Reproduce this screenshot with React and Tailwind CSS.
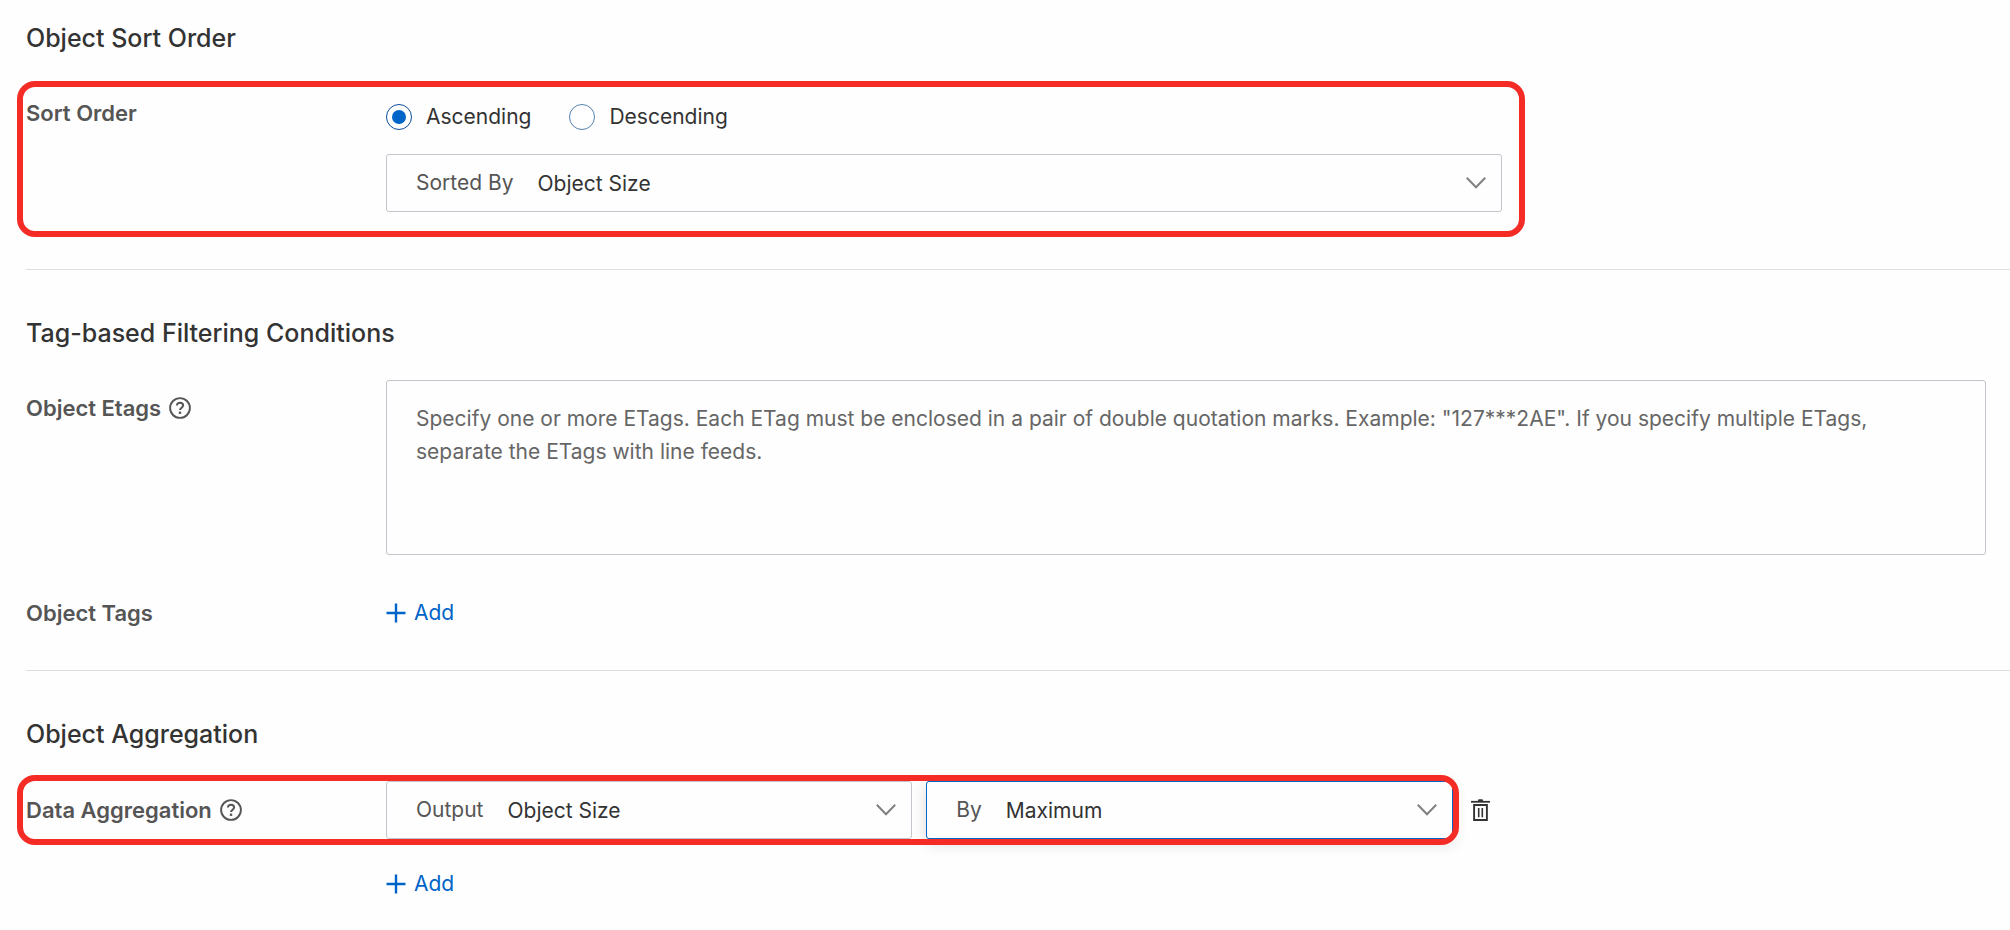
import { useState } from "react";

const HEADING = "text-[25px] leading-[34px] font-medium text-[#333333]";
const LABEL = "flex w-[360px] shrink-0 items-center gap-2 text-[22px] leading-[32px] font-semibold text-[#555555]";
const FRAME = "pointer-events-none absolute inset-0 rounded-[18px] border-[6px] border-[#f52c25]";

function HelpIcon() {
  return (
    <svg viewBox="0 0 22 22" className="size-[22px]" fill="none" stroke="currentColor" strokeWidth="2" aria-hidden="true">
      <circle cx="11" cy="11" r="9.9" strokeWidth="1.9" />
      <path d="M7.9 8.6C7.9 6.9 9.2 5.8 11 5.8s3.1 1.1 3.1 2.7c0 2.1-3.1 2.3-3.1 4.6" />
      <path d="M11 14.6v2.3" strokeWidth="2.4" />
    </svg>
  );
}

function TrashIcon() {
  return (
    <svg viewBox="0 0 19 22" className="h-[22px] w-[19px]" fill="none" stroke="#333333" aria-hidden="true">
      <path d="M0 2.8h19" strokeWidth="1.8" />
      <path d="M6.5 2.4L7.5 0.3h4l1 2.1z" fill="#333333" stroke="none" />
      <path d="M3.1 6h12.8v15H3.1z" strokeWidth="1.9" />
      <path d="M7.7 9v9.2M11.3 9v9.2" strokeWidth="1.6" />
    </svg>
  );
}

function Radio({ label, value, current, onChange }) {
  return (
    <label className="flex items-center gap-[14px] text-[21px] leading-[32px] text-[#333333]">
      <input
        type="radio"
        name="sort-order"
        value={value}
        checked={current === value}
        onChange={() => onChange(value)}
        className="grid size-[26px] appearance-none place-content-center rounded-full border border-[#5580b0] bg-white checked:border-[#0a4c9c] checked:before:size-[14px] checked:before:rounded-full checked:before:bg-[#0064c8]"
      />
      {label}
    </label>
  );
}

function PrefixedSelect({ id, prefix, options, active }) {
  return (
    <div
      className={
        active
          ? "relative flex h-[58px] flex-1 items-center rounded-[3px] border border-[#0064c8] bg-[#fefefe] pl-[29px] shadow-[0_4px_16px_rgba(0,0,0,0.14)]"
          : "relative flex h-[58px] flex-1 items-center rounded-[3px] border border-[#c0c6cc] bg-[#fefefe] pl-[29px]"
      }
    >
      <label htmlFor={id} className="text-[21px] leading-[32px] whitespace-nowrap text-[#555555]">
        {prefix}
      </label>
      <select
        id={id}
        className="h-full min-w-0 flex-1 appearance-none bg-transparent pt-[2px] pr-[56px] pl-6 text-[21px] leading-[32px] text-[#333333] outline-none"
      >
        {options.map((option) => (
          <option key={option}>{option}</option>
        ))}
      </select>
      <svg
        viewBox="0 0 20 12"
        className="pointer-events-none absolute right-[15px] h-[12px] w-[20px]"
        fill="none"
        stroke="#808080"
        strokeWidth="2"
        aria-hidden="true"
      >
        <path d="M0.8 0.8L10 10.2L19.2 0.8" />
      </svg>
    </div>
  );
}

function AddButton() {
  return (
    <button type="button" className="flex items-center gap-2 text-[21px] leading-[32px] text-[#0064c8]">
      <svg viewBox="0 0 20 20" className="size-[20px]" stroke="currentColor" strokeWidth="2.4" aria-hidden="true">
        <path d="M10 0.5v19M0.5 10h19" />
      </svg>
      Add
    </button>
  );
}

export default function App() {
  const [order, setOrder] = useState("asc");

  return (
    <main className="min-h-screen bg-[#fefefe] pb-4 font-[Inter,'Liberation_Sans',sans-serif]">
      <section className="pt-[21px] pb-8">
        <h2 className={`${HEADING} pl-[26px]`}>Object Sort Order</h2>
        <div className="relative mt-[26px] ml-[17px] flex w-3/4 pt-4 pr-[23px] pb-[25px] pl-[9px]">
          <div className={`${LABEL} self-start`}>Sort Order</div>
          <div className="flex-1">
            <div className="mt-1 mb-[21px] flex gap-[38px]" role="radiogroup" aria-label="Sort Order">
              <Radio label="Ascending" value="asc" current={order} onChange={setOrder} />
              <Radio label="Descending" value="desc" current={order} onChange={setOrder} />
            </div>
            <div className="flex">
              <PrefixedSelect id="sorted-by" prefix="Sorted By" options={["Object Size", "Object Name"]} />
            </div>
          </div>
          <div className={FRAME} />
        </div>
      </section>

      <section className="ml-[26px] border-t border-[#dedede] pt-[46px] pb-[41px]">
        <h2 className={HEADING}>Tag-based Filtering Conditions</h2>
        <div className="mt-[30px] flex pr-6">
          <div className={`${LABEL} mt-3 self-start`}>
            <label htmlFor="etags">Object Etags</label>
            <HelpIcon />
          </div>
          <textarea
            id="etags"
            placeholder={'Specify one or more ETags. Each ETag must be enclosed in a pair of double quotation marks. Example: "127***2AE". If you specify multiple ETags, separate the ETags with line feeds.'}
            className="block h-[175px] flex-1 resize-none rounded-[3px] border border-[#c0c6cc] bg-transparent px-[29px] py-[21px] text-[21px] leading-[33px] text-[#333333] outline-none placeholder:text-[#666666]"
          />
        </div>
        <div className="mt-[42px] flex items-center">
          <div className={LABEL}>Object Tags</div>
          <AddButton />
        </div>
      </section>

      <section>
        <div className="ml-[26px] border-t border-[#dedede] pt-[46px]">
          <h2 className={HEADING}>Object Aggregation</h2>
        </div>
        <div className="mt-6 ml-[17px] flex w-3/4 items-center gap-3 pr-[35px]">
          <div className="relative flex flex-1 items-center py-[6px] pr-[6px] pl-[9px]">
            <div className={LABEL}>
              Data Aggregation
              <HelpIcon />
            </div>
            <div className="flex flex-1 gap-[14px]">
              <PrefixedSelect id="output" prefix="Output" options={["Object Size", "Object Name"]} />
              <PrefixedSelect id="by" prefix="By" options={["Maximum", "Minimum", "Average"]} active />
            </div>
            <div className={FRAME} />
          </div>
          <button type="button" aria-label="Delete">
            <TrashIcon />
          </button>
        </div>
        <div className="mt-[23px] pl-[386px]">
          <AddButton />
        </div>
      </section>
    </main>
  );
}
